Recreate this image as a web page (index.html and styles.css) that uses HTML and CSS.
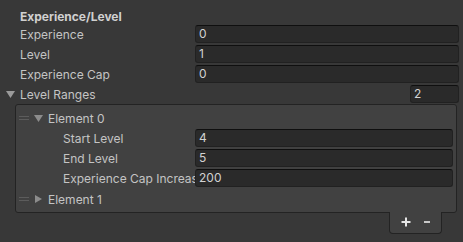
FILE: index.html
```html
<!DOCTYPE html>
<html>
<head>
<meta charset="utf-8">
<link rel="stylesheet" href="styles.css">
</head>
<body>
<div class="inspector">
  <div class="header">Experience/Level</div>
  <div class="row"><div class="label">Experience</div><div class="field">0</div></div>
  <div class="row"><div class="label">Level</div><div class="field">1</div></div>
  <div class="row"><div class="label">Experience Cap</div><div class="field">0</div></div>
  <div class="row ranges">
    <svg class="fold" width="9" height="7" viewBox="0 0 9 7"><polygon points="0,0 9,0 4.5,7" fill="#9a9a9a"/></svg>
    <div class="label grow">Level Ranges</div>
    <div class="field count">2</div>
  </div>
  <div class="list">
    <div class="elem">
      <svg class="handle" width="10" height="5" viewBox="0 0 10 5"><rect x="0" y="0" width="10" height="1" fill="#5c5c5c"/><rect x="0" y="3" width="10" height="1" fill="#5c5c5c"/></svg>
      <svg class="etri" width="9" height="7" viewBox="0 0 9 7"><polygon points="0,0 9,0 4.5,7" fill="#8c8c8c"/></svg>
      <div class="elabel">Element 0</div>
    </div>
    <div class="row sub"><div class="label sublabel">Start Level</div><div class="field">4</div></div>
    <div class="row sub"><div class="label sublabel">End Level</div><div class="field">5</div></div>
    <div class="row sub"><div class="label sublabel">Experience Cap Increase</div><div class="field">200</div></div>
    <div class="elem last">
      <svg class="handle" width="10" height="5" viewBox="0 0 10 5"><rect x="0" y="0" width="10" height="1" fill="#5c5c5c"/><rect x="0" y="3" width="10" height="1" fill="#5c5c5c"/></svg>
      <svg class="etri" width="9" height="8" viewBox="0 0 9 8"><polygon points="1,0 8,4 1,8" fill="#8c8c8c"/></svg>
      <div class="elabel">Element 1</div>
    </div>
  </div>
  <div class="footer">
    <div class="tab">
      <svg width="10" height="10" viewBox="0 0 10 10"><rect x="0.5" y="4" width="9" height="2" fill="#e6e6e6"/><rect x="4" y="0.5" width="2" height="9" fill="#e6e6e6"/></svg>
      <svg width="8" height="10" viewBox="0 0 8 10"><rect x="1" y="4" width="6" height="2" fill="#c8c8c8"/></svg>
    </div>
  </div>
</div>
</body>
</html>
```

FILE: styles.css
```css
html, body {
  margin: 0;
  padding: 0;
}
body {
  background: #383838;
  font-family: Inter, "Noto Sans", sans-serif;
  font-size: 12px;
  color: #c4c4c4;
  width: 463px;
  height: 242px;
  overflow: hidden;
}
.inspector {
  padding-top: 9px;
}
.header {
  height: 15px;
  line-height: 15px;
  padding-left: 20px;
  font-weight: 700;
  color: #d0d0d0;
}
.row {
  display: flex;
  align-items: center;
  height: 20px;
  padding-right: 4px;
}
.label {
  width: 195px;
  padding-left: 20px;
  padding-right: 2px;
  box-sizing: border-box;
  white-space: nowrap;
  overflow: hidden;
}
.label.grow {
  flex: 1;
  padding-left: 5px;
}
.field {
  flex: 1;
  height: 18px;
  box-sizing: border-box;
  background: #2a2a2a;
  border: 1px solid #212121;
  border-top-color: #0f0f0f;
  border-radius: 3px;
  padding-left: 3px;
  line-height: 16px;
  color: #d2d2d2;
}
.field.count {
  flex: 0 0 49px;
}
.ranges {
  padding-left: 6px;
}
.fold {
  display: block;
  margin-top: 1px;
}
.list {
  margin-left: 15px;
  width: 442px;
  box-sizing: border-box;
  background: #414141;
  border: 1px solid #232323;
  border-radius: 3px;
  padding: 3px 3px 3px 0;
}
.elem {
  display: flex;
  align-items: center;
  height: 20px;
  padding-left: 3px;
}
.elem.last {
  margin-top: 1px;
}
.handle {
  display: block;
}
.etri {
  display: block;
  margin-left: 5px;
}
.elabel {
  margin-left: 5px;
}
.row.sub {
  padding-right: 0;
}
.sublabel {
  width: 179px;
  padding-left: 47px;
}
.footer {
  display: flex;
  justify-content: flex-end;
  width: 457px;
  padding-right: 15px;
  box-sizing: border-box;
}
.tab {
  margin-top: -1px;
  width: 53px;
  height: 22px;
  box-sizing: border-box;
  background: #414141;
  border: 1px solid #232323;
  border-top: none;
  border-radius: 0 0 4px 4px;
  display: flex;
  align-items: center;
  justify-content: center;
  gap: 12px;
  padding-bottom: 1px;
}
.tab svg {
  display: block;
}
```
